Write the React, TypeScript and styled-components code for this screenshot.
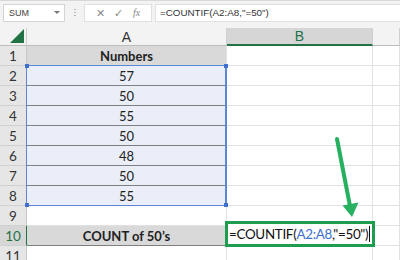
import React from "react";
import styled, { createGlobalStyle } from "styled-components";

const Global = createGlobalStyle`
  html, body { margin: 0; padding: 0; background: #ffffff; }
  body { font-family: "Lato", "Liberation Sans", sans-serif; }
`;

const Frame = styled.div`
  position: relative;
  width: 400px;
  height: 260px;
  overflow: hidden;
  background: #ffffff;
`;

const Toolbar = styled.div`
  display: flex;
  align-items: center;
  height: 28px;
  box-sizing: border-box;
  padding: 0 0 4px 3px;
  background: #f3f3f3;
  border-top: 1px solid #d8d8d8;
`;

const NameBox = styled.div`
  display: flex;
  align-items: center;
  justify-content: space-between;
  box-sizing: border-box;
  width: 62px;
  height: 18px;
  padding: 0 4px 0 5px;
  background: #ffffff;
  border: 1px solid #d4d4d4;
  font-family: "Liberation Sans", sans-serif;
  font-size: 9px;
  color: #444444;
`;

const Caret = styled.span`
  width: 0;
  height: 0;
  border-left: 3px solid transparent;
  border-right: 3px solid transparent;
  border-top: 3px solid #777777;
`;

const Grip = styled.div`
  width: 2px;
  height: 10px;
  margin: 0 8px 0 9px;
  background-image: radial-gradient(circle, #b8b8b8 45%, transparent 50%);
  background-size: 2px 3px;
`;

const FxButtons = styled.div`
  display: flex;
  align-items: center;
  justify-content: space-around;
  box-sizing: border-box;
  width: 68px;
  height: 18px;
  padding: 0 6px;
  background: #ffffff;
  border: 1px solid #e0e0e0;
  color: #8a8a8a;
  font-size: 11px;
`;

const FxGlyph = styled.span`
  font-family: "Liberation Serif", serif;
  font-style: italic;
  font-size: 10px;
  color: #888888;
`;

const FormulaInput = styled.div`
  flex: 1;
  display: flex;
  align-items: center;
  box-sizing: border-box;
  height: 18px;
  margin-left: 3px;
  padding-left: 4px;
  background: #ffffff;
  border: 1px solid #e0e0e0;
  border-right: none;
  font-family: "Liberation Sans", sans-serif;
  font-size: 9.8px;
  color: #333333;
`;

const Sheet = styled.div`
  display: grid;
  grid-template-columns: 27px 200px 146px 1fr;
  grid-auto-rows: 20px;
  grid-template-rows: 18px;
  font-size: 13px;
  color: #222222;
`;

const Corner = styled.div`
  position: relative;
  background: #f3f3f3;
  border-right: 1px solid #cfcfcf;
  border-bottom: 1px solid #bdbdbd;
`;

const CornerTriangle = styled.div`
  position: absolute;
  right: 2px;
  bottom: 2px;
  width: 0;
  height: 0;
  border-left: 14px solid transparent;
  border-bottom: 14px solid #217346;
`;

const ColHead = styled.div<{ $active?: boolean }>`
  display: flex;
  align-items: center;
  justify-content: center;
  box-sizing: border-box;
  background: ${(p) => (p.$active ? "#d6d6d6" : "#f3f3f3")};
  color: ${(p) => (p.$active ? "#217346" : "#333333")};
  border-right: 1px solid #d0d0d0;
  border-bottom: ${(p) => (p.$active ? "2px solid #217346" : "1px solid #bdbdbd")};
  font-family: "Liberation Sans", sans-serif;
  font-size: 14px;
`;

const RowHead = styled.div<{ $active?: boolean }>`
  display: flex;
  align-items: center;
  justify-content: center;
  box-sizing: border-box;
  background: ${(p) => (p.$active ? "#d6d6d6" : "#e6e6e6")};
  color: ${(p) => (p.$active ? "#217346" : "#333333")};
  border-right: ${(p) => (p.$active ? "1px solid #217346" : "1px solid #c6c6c6")};
  border-bottom: 1px solid #d0d0d0;
  font-size: 13.5px;
`;

type Tone = "plain" | "header" | "ref";

const Cell = styled.div<{ $tone?: Tone; $bold?: boolean }>`
  position: relative;
  display: flex;
  align-items: center;
  justify-content: center;
  box-sizing: border-box;
  background: ${(p) =>
    p.$tone === "header" ? "#d9d9d9" : p.$tone === "ref" ? "#e9eef8" : "#ffffff"};
  border-right: 1px solid #e1e1e1;
  border-bottom: 1px solid
    ${(p) => (p.$tone === "plain" || !p.$tone ? "#e1e1e1" : "#7f7f7f")};
  font-weight: ${(p) => (p.$bold ? 700 : 400)};
  white-space: nowrap;
`;

const RefBox = styled.div`
  position: absolute;
  left: 26px;
  top: 65px;
  width: 201px;
  height: 141px;
  box-sizing: border-box;
  border: 1px solid #5b87d6;
  border-right-width: 2px;
  pointer-events: none;
`;

const Handle = styled.span<{ $x: "l" | "r"; $y: "t" | "b" }>`
  position: absolute;
  width: 4px;
  height: 4px;
  background: #3f6fd0;
  ${(p) => (p.$x === "l" ? "left: -2px;" : "right: -3px;")}
  ${(p) => (p.$y === "t" ? "top: -2px;" : "bottom: -2px;")}
`;

const EditBox = styled.div`
  position: absolute;
  left: -2px;
  right: -3px;
  top: -5px;
  bottom: -2px;
  display: flex;
  align-items: center;
  padding-left: 1px;
  box-sizing: border-box;
  background: #ffffff;
  border: 3px solid #1f9d4f;
  font-size: 13.4px;
  letter-spacing: -0.3px;
  color: #111111;
  white-space: nowrap;
  z-index: 2;
`;

const RefText = styled.span`
  color: #3b6fcb;
`;

const Cursor = styled.span`
  display: inline-block;
  width: 1px;
  height: 16px;
  margin-left: 1px;
  background: #111111;
`;

const Arrow = styled.svg`
  position: absolute;
  left: 0;
  top: 0;
  pointer-events: none;
  z-index: 3;
`;

const rows: { n: number; a: string; tone: Tone; bold?: boolean }[] = [
  { n: 1, a: "Numbers", tone: "header", bold: true },
  { n: 2, a: "57", tone: "ref" },
  { n: 3, a: "50", tone: "ref" },
  { n: 4, a: "55", tone: "ref" },
  { n: 5, a: "50", tone: "ref" },
  { n: 6, a: "48", tone: "ref" },
  { n: 7, a: "50", tone: "ref" },
  { n: 8, a: "55", tone: "ref" },
  { n: 9, a: "", tone: "plain" },
  { n: 10, a: "COUNT of 50\u2019s", tone: "header", bold: true },
  { n: 11, a: "", tone: "plain" },
];

export default function App() {
  return (
    <Frame>
      <Global />
      <Toolbar>
        <NameBox>
          SUM
          <Caret />
        </NameBox>
        <Grip />
        <FxButtons>
          <span>✕</span>
          <span>✓</span>
          <FxGlyph>fx</FxGlyph>
        </FxButtons>
        <FormulaInput>=COUNTIF(A2:A8,"=50")</FormulaInput>
      </Toolbar>
      <Sheet>
        <Corner>
          <CornerTriangle />
        </Corner>
        <ColHead>A</ColHead>
        <ColHead $active>B</ColHead>
        <ColHead />
        {rows.map((r) => (
          <React.Fragment key={r.n}>
            <RowHead $active={r.n === 10}>{r.n}</RowHead>
            <Cell $tone={r.tone} $bold={r.bold}>
              {r.a}
            </Cell>
            <Cell>
              {r.n === 10 && (
                <EditBox>
                  =COUNTIF(<RefText>A2:A8</RefText>,"=50")
                  <Cursor />
                </EditBox>
              )}
            </Cell>
            <Cell />
          </React.Fragment>
        ))}
      </Sheet>
      <RefBox>
        <Handle $x="l" $y="t" />
        <Handle $x="r" $y="t" />
        <Handle $x="l" $y="b" />
        <Handle $x="r" $y="b" />
      </RefBox>
      <Arrow width="400" height="260" viewBox="0 0 400 260">
        <line x1="337" y1="139" x2="350" y2="206" stroke="#27b060" strokeWidth="4" strokeLinecap="round" />
        <polygon points="352,217 342.5,205.5 358.5,202.5" fill="#27b060" />
      </Arrow>
    </Frame>
  );
}
